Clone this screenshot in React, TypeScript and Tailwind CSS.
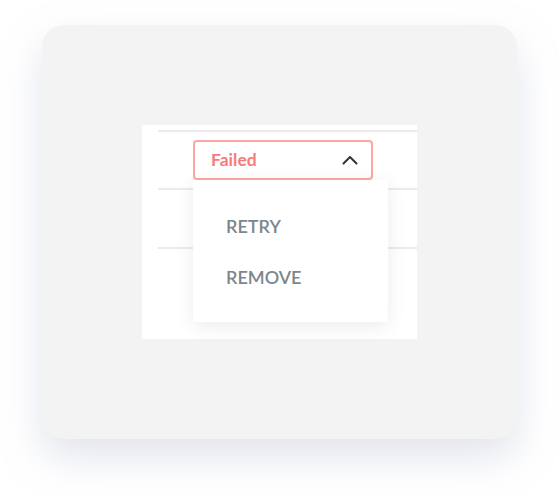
import React from "react";

export default function App() {
  return (
    <div className="w-[559px] h-[498px] bg-white pt-[25px] pl-[42px]" style={{ fontFamily: "Lato, 'Open Sans', sans-serif" }}>
      <div className="w-[475px] h-[414px] rounded-[22px] bg-[#f3f3f4] shadow-[0_18px_40px_rgba(170,178,200,0.35)] flex items-center justify-center">
        <div className="w-[275px] h-[214px] bg-white pt-[5px] pl-[16px]">
          <div className="h-[2px] bg-[#ebebeb]" />
          <div className="h-[56px] pt-[8px] pl-[35px]">
            <div className="relative w-[180px]">
              <div className="h-[40px] border-2 border-[#ffa5a5] rounded-[4px] bg-white flex items-center justify-between pl-[16px] pr-[13px]">
                <span className="text-[17.5px] font-bold text-[#f77b7b] leading-none">Failed</span>
                <svg width="16" height="10" viewBox="0 0 16 10" fill="none">
                  <path d="M1.5 8.5 L8 2 L14.5 8.5" stroke="#333" strokeWidth="2" strokeLinecap="round" strokeLinejoin="round" />
                </svg>
              </div>
              <div className="absolute left-0 top-full w-[195px] h-[142px] bg-white shadow-[0_4px_18px_rgba(0,0,0,0.08)] z-10 pt-[34px] pl-[33px] flex flex-col gap-[27px]">
                <div className="text-[18px] leading-[24px] font-semibold text-[#7d868c]">RETRY</div>
                <div className="text-[18px] leading-[24px] font-semibold text-[#7d868c]">REMOVE</div>
              </div>
            </div>
          </div>
          <div className="h-[2px] bg-[#ebebeb]" />
          <div className="h-[57px]" />
          <div className="h-[2px] bg-[#ebebeb]" />
        </div>
      </div>
    </div>
  );
}
